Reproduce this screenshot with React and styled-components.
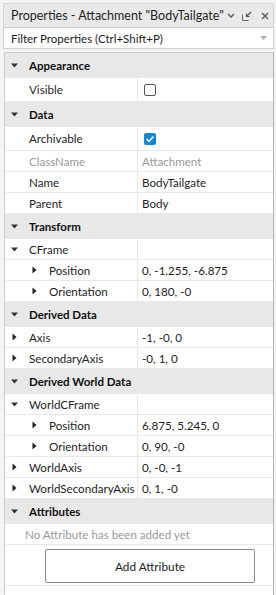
import React from "react";
import styled, { createGlobalStyle } from "styled-components";

const Global = createGlobalStyle`
  html, body { margin: 0; padding: 0; background: #f3f3f3; }
  * { box-sizing: border-box; }
`;

const Window = styled.div`
  width: 276px;
  height: 595px;
  background: #f3f3f3;
  padding: 3px 2px 0 3px;
  display: flex;
  flex-direction: column;
  overflow: hidden;
  font-family: Lato, "Liberation Sans", sans-serif;
`;

const TitleBar = styled.div`
  height: 24px;
  flex: none;
  background: #e9e9e9;
  border: 1px solid #d6d6d6;
  border-bottom: none;
  display: flex;
  align-items: center;
  padding: 0 0 0 7px;
  color: #1e1e1e;
  font-size: 12.5px;
`;

const Title = styled.span`
  flex: 1;
  white-space: nowrap;
`;

const TitleIcons = styled.div`
  display: flex;
  align-items: center;
  padding-right: 5px;
  color: #555;
`;

const TitleIcon = styled.span`
  width: ${(p) => p.$w}px;
  height: 16px;
  display: flex;
  align-items: center;
  justify-content: center;
`;

const Filter = styled.div`
  height: 22px;
  flex: none;
  background: #fff;
  border: 1px solid #cfcfcf;
  display: flex;
  align-items: center;
  padding: 0 6px 0 7px;
  font-size: 11.5px;
  color: #1e1e1e;
`;

const FilterText = styled.span`
  flex: 1;
`;

const Panel = styled.div`
  margin: 3px 0 0 1px;
  flex: 1;
  background: #fff;
  border: 1px solid #cdcdcd;
  border-right-color: #b3b3b3;
  border-bottom: none;
  display: flex;
  flex-direction: column;
`;

const Header = styled.div`
  height: 25px;
  flex: none;
  background: #e8e8e8;
  display: flex;
  align-items: center;
  padding-left: 6px;
  font-weight: 700;
  font-size: 11.5px;
  color: #111;
`;

const Row = styled.div`
  height: ${(p) => (p.$tall ? 24 : 21)}px;
  flex: none;
  display: grid;
  grid-template-columns: 133px 1fr;
  border-bottom: 1px solid #e9e9e9;
  font-size: 11.6px;
  color: ${(p) => (p.$disabled ? "#9a9a9a" : "#1e1e1e")};
`;

const NameCell = styled.div`
  display: flex;
  align-items: center;
  border-right: 1px solid #e9e9e9;
  padding-left: ${(p) => 6 + p.$depth * 20}px;
  white-space: nowrap;
  overflow: hidden;
`;

const ValueCell = styled.div`
  display: flex;
  align-items: center;
  padding-left: 4px;
  white-space: nowrap;
`;

const Toggle = styled.span`
  width: 18px;
  flex: none;
  display: flex;
  align-items: center;
  padding-left: ${(p) => (p.$down ? 0 : 1)}px;
`;

const Check = styled.span`
  width: 12px;
  height: 12px;
  margin-left: 2px;
  border-radius: 2px;
  border: ${(p) => (p.$on ? "none" : "1px solid #555")};
  background: ${(p) => (p.$on ? "#0e86e0" : "#fff")};
  display: flex;
  align-items: center;
  justify-content: center;
`;

const InfoRow = styled.div`
  height: 21px;
  flex: none;
  display: flex;
  align-items: center;
  padding-left: 20px;
  border-bottom: 1px solid #e9e9e9;
  color: #9a9a9a;
  font-size: 11.6px;
`;

const ButtonRow = styled.div`
  height: 41px;
  flex: none;
  border-bottom: 1px solid #e9e9e9;
  padding: 4px 0 0 40px;
`;

const AddButton = styled.button`
  width: 210px;
  height: 34px;
  background: #fff;
  border: 1px solid #8a8a8a;
  border-radius: 2px;
  font-family: Lato, "Liberation Sans", sans-serif;
  font-size: 11.8px;
  color: #1e1e1e;
  padding: 0;
`;

const Down = () => (
  <svg width="7" height="5" viewBox="0 0 7 5">
    <path d="M0 0.5 H7 L3.5 4.5 Z" fill="#333" />
  </svg>
);

const Right = () => (
  <svg width="5" height="8" viewBox="0 0 5 8">
    <path d="M0.5 0.5 V7.5 L4.5 4 Z" fill="#222" />
  </svg>
);

const Tick = () => (
  <svg width="10" height="8" viewBox="0 0 10 8">
    <path d="M1.5 4 L4 6.3 L8.5 1.5" stroke="#fff" strokeWidth="1.6" fill="none" />
  </svg>
);

const Section = ({ title }) => (
  <Header>
    <Toggle $down>
      <Down />
    </Toggle>
    {title}
  </Header>
);

const Prop = ({ name, value, depth = 0, toggle, tall, disabled, check }) => (
  <Row $tall={tall} $disabled={disabled}>
    <NameCell $depth={depth}>
      <Toggle $down={toggle === "down"}>
        {toggle === "down" && <Down />}
        {toggle === "right" && <Right />}
      </Toggle>
      {name}
    </NameCell>
    <ValueCell>
      {check !== undefined ? (
        <Check $on={check}>{check && <Tick />}</Check>
      ) : (
        value
      )}
    </ValueCell>
  </Row>
);

export default function App() {
  return (
    <>
      <Global />
      <Window>
        <TitleBar>
          <Title>Properties - Attachment "BodyTailgate"</Title>
          <TitleIcons>
            <TitleIcon $w={14}>
              <svg width="8" height="6" viewBox="0 0 8 6">
                <path d="M1 1 L4 4 L7 1" stroke="#555" strokeWidth="1.3" fill="none" />
              </svg>
            </TitleIcon>
            <TitleIcon $w={18}>
              <svg width="10" height="10" viewBox="0 0 10 10">
                <path d="M0.5 3.5 V9.5 H6.5" stroke="#666" strokeWidth="1" fill="none" />
                <path d="M9 1 L4.5 5.5 M4.5 2.5 V5.5 H7.5" stroke="#555" strokeWidth="1.2" fill="none" />
              </svg>
            </TitleIcon>
            <TitleIcon $w={18}>
              <svg width="8" height="8" viewBox="0 0 8 8">
                <path d="M1 1 L7 7 M7 1 L1 7" stroke="#555" strokeWidth="1.2" fill="none" />
              </svg>
            </TitleIcon>
          </TitleIcons>
        </TitleBar>
        <Filter>
          <FilterText>Filter Properties (Ctrl+Shift+P)</FilterText>
          <svg width="7" height="4" viewBox="0 0 7 4">
            <path d="M0 0 H7 L3.5 4 Z" fill="#b0b0b0" />
          </svg>
        </Filter>
        <Panel>
          <Section title="Appearance" />
          <Prop name="Visible" tall check={false} />
          <Section title="Data" />
          <Prop name="Archivable" tall check={true} />
          <Prop name="ClassName" value="Attachment" disabled />
          <Prop name="Name" value="BodyTailgate" />
          <Prop name="Parent" value="Body" />
          <Section title="Transform" />
          <Prop name="CFrame" toggle="down" value="" />
          <Prop name="Position" depth={1} toggle="right" value="0, -1.255, -6.875" />
          <Prop name="Orientation" depth={1} toggle="right" value="0, 180, -0" />
          <Section title="Derived Data" />
          <Prop name="Axis" toggle="right" value="-1, -0, 0" />
          <Prop name="SecondaryAxis" toggle="right" value="-0, 1, 0" />
          <Section title="Derived World Data" />
          <Prop name="WorldCFrame" toggle="down" value="" />
          <Prop name="Position" depth={1} toggle="right" value="6.875, 5.245, 0" />
          <Prop name="Orientation" depth={1} toggle="right" value="0, 90, -0" />
          <Prop name="WorldAxis" toggle="right" value="0, -0, -1" />
          <Prop name="WorldSecondaryAxis" toggle="right" value="0, 1, -0" />
          <Section title="Attributes" />
          <InfoRow>No Attribute has been added yet</InfoRow>
          <ButtonRow>
            <AddButton>Add Attribute</AddButton>
          </ButtonRow>
        </Panel>
      </Window>
    </>
  );
}
